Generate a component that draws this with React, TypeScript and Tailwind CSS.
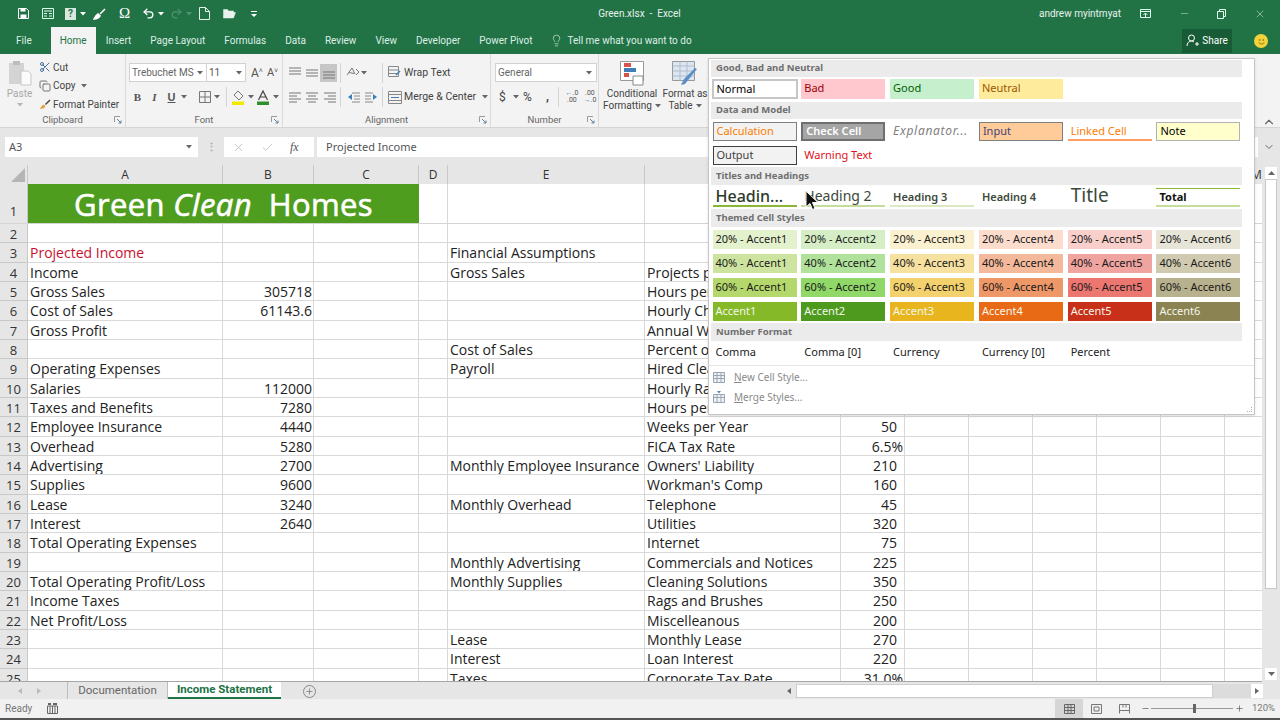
import React from 'react'
import { Scissors, Copy, Undo2, Redo2, Lightbulb, X, Minus, Check, Plus, ChevronUp, ChevronDown } from 'lucide-react'

const Caret = ({ c = '#666' }: { c?: string }) => (
    <svg width="6" height="4" viewBox="0 0 6 4" className="shrink-0"><path d="M0 0h6L3 3.5z" fill={c} /></svg>
)

const Launcher = () => (
    <svg width="8" height="8" viewBox="0 0 8 8" className="shrink-0"><path d="M.5 6V.5H6" fill="none" stroke="#9a9a9a" /><path d="M3 3l4 4M4.5 7H7V4.5" fill="none" stroke="#5f7f9f" /></svg>
)

const Sep = () => <div className="w-px h-[20px] bg-[#d4d4d4] shrink-0" />

const Lines = ({ rows, color = '#777' }: { rows: number[][]; color?: string }) => (
    <svg width="14" height="12" viewBox="0 0 14 12" className="shrink-0">
        {rows.map((r, i) => <path key={i} d={`M${r[0]} ${r[2]}H${r[1]}`} stroke={color} strokeWidth="1" />)}
    </svg>
)

const Tab = ({ label, className = '' }: { label: string; className?: string }) => (
    <span className={`text-[10px] text-[#dfeee5] whitespace-nowrap ${className}`}>{label}</span>
)

const TitleBar = () => (
    <div className="h-[27px] flex items-center text-white relative shrink-0">
        <div className="flex items-center w-[270px] pl-[18px]">
            <svg width="11" height="11" viewBox="0 0 11 11"><path d="M.5.5h8l2 2v8H.5z" fill="none" stroke="#fff" /><path d="M2.5.5h5v3h-5zM2.5 6.5h6v4h-6z" fill="#fff" /></svg>
            <svg width="12" height="11" viewBox="0 0 12 11" className="ml-[13px]"><path d="M.5.5h11v10H.5z" fill="none" stroke="#dfe" /><path d="M2 3h8M2 5.5h3M7 5.5h3M2 8h3M7 8h3" stroke="#dfe" /></svg>
            <div className="ml-[11px] w-[11px] h-[12px] bg-[#d8e8de] text-[#217346] text-[10px] leading-[12px] font-bold text-center">?</div>
            <div className="ml-[4px]"><Caret c="#fff" /></div>
            <svg width="13" height="12" viewBox="0 0 13 12" className="ml-[7px]"><path d="M7 6l5-5M1 11c3 0 5-1 6-3L5 6c-2 1-3 3-4 5z" stroke="#fff" strokeWidth="1.5" fill="#fff" /></svg>
            <span className="ml-[13px] text-[15px] font-['Liberation_Serif',serif] leading-none w-[13px]">Ω</span>
            <Undo2 size={13} strokeWidth={2.5} className="ml-[10px]" />
            <div className="ml-[3px]"><Caret c="#fff" /></div>
            <Redo2 size={13} strokeWidth={2} className="ml-[6px] text-[#4f9470]" />
            <div className="ml-[3px]"><Caret c="#4f9470" /></div>
            <svg width="11" height="13" viewBox="0 0 11 13" className="ml-[7px]"><path d="M.5.5h6l4 4v8H.5zM6.5.5v4h4" fill="none" stroke="#e8f2ec" /></svg>
            <svg width="13" height="11" viewBox="0 0 13 11" className="ml-[13px]"><path d="M.5 10V1.5h4l1 1.5h5v1.5H3L.5 10h10l2-5.5H3" fill="#e8f2ec" stroke="#e8f2ec" strokeWidth=".5" /></svg>
            <svg width="6" height="6" viewBox="0 0 6 6" className="ml-[15px]"><path d="M0 0h6v1H0zM0 3h6L3 6z" fill="#fff" /></svg>
        </div>
        <div className="flex-1 text-center text-[10px] text-[#e8f2ec] -ml-[1px]">Green.xlsx&nbsp; -&nbsp; Excel</div>
        <div className="flex items-center w-[270px] justify-end pr-[14px] text-[#e8f2ec]">
            <span className="text-[10px] mr-[19px]">andrew myintmyat</span>
            <svg width="11" height="9" viewBox="0 0 11 9"><path d="M.5.5h10v8H.5zM.5 2.5h10M5.5 8V4M3.5 6l2-2 2 2" fill="none" stroke="#dfe" /></svg>
            <Minus size={11} className="ml-[28px]" strokeWidth={1} />
            <svg width="9" height="10" viewBox="0 0 9 10" className="ml-[27px]"><path d="M.5 2.5h6v7h-6zM2.5 2.5v-2h6v7h-2" fill="none" stroke="#dfe" /></svg>
            <X size={12} strokeWidth={1} className="ml-[28px]" />
        </div>
    </div>
)

const TabBar = () => (
    <div className="h-[27px] flex items-center shrink-0 pl-[16px]">
        <Tab label="File" />
        <div className="ml-[19px] h-[27px] w-[45px] bg-[#f3f3f3] text-[#217346] text-[10px] flex items-center justify-center self-end">Home</div>
        <Tab label="Insert" className="ml-[10px]" />
        <Tab label="Page Layout" className="ml-[19px]" />
        <Tab label="Formulas" className="ml-[19px]" />
        <Tab label="Data" className="ml-[19px]" />
        <Tab label="Review" className="ml-[19px]" />
        <Tab label="View" className="ml-[19px]" />
        <Tab label="Developer" className="ml-[19px]" />
        <Tab label="Power Pivot" className="ml-[19px]" />
        <Lightbulb size={13} strokeWidth={1.2} className="ml-[18px] text-[#dfeee5]" />
        <Tab label="Tell me what you want to do" className="ml-[4px] text-[#c4dccd]" />
        <div className="ml-auto mr-[48px] h-[24px] w-[50px] bg-[#185c37] flex items-center justify-center gap-[3px] text-white text-[10px]">
            <svg width="13" height="13" viewBox="0 0 13 13"><circle cx="5.5" cy="4" r="3" fill="none" stroke="#fff" /><path d="M1 12c0-3 2-5 4.5-5M9 10h4M11 8v4M5.5 7c1 0 2 .5 2.5 1" fill="none" stroke="#fff" /></svg>
            Share
        </div>
        <div className="absolute right-[12px] top-[34px] w-[14px] h-[14px] rounded-full bg-[#f3d33c] flex items-center justify-center">
            <svg width="11" height="11" viewBox="0 0 11 11"><circle cx="3.8" cy="4" r=".8" fill="#7a5c00" /><circle cx="7.2" cy="4" r=".8" fill="#7a5c00" /><path d="M2.8 6.5c1 2 4.4 2 5.4 0" fill="none" stroke="#7a5c00" strokeWidth=".8" /></svg>
        </div>
    </div>
)

const Group = ({ label, className, children }: { label: string; className: string; children: React.ReactNode }) => (
    <div className={`flex flex-col h-full border-r border-[#dadada] shrink-0 ${className}`}>
        <div className="flex-1 min-h-0">{children}</div>
        <div className="h-[14px] flex items-center justify-center relative text-[9.5px] text-[#666]">
            {label}
            <div className="absolute right-[3px] top-[3px]"><Launcher /></div>
        </div>
    </div>
)

const Ribbon = () => (
    <div className="h-[74px] bg-[#f3f3f3] flex shrink-0 border-b border-[#d5d5d5] text-[#444]">
        <Group label="Clipboard" className="w-[126px]">
            <div className="flex">
                <div className="w-[39px] flex flex-col items-center pt-[6px]">
                    <svg width="24" height="26" viewBox="0 0 24 26"><path d="M1 3h15v21H1z" fill="#d4d4d4" /><path d="M5 1h7v4H5z" fill="#bdbdbd" /><path d="M13 11h7l3 3v11H13z" fill="#fbfbfb" stroke="#c6c6c6" /></svg>
                    <span className="text-[10px] text-[#a9a9a9] leading-[13px] mt-[1px]">Paste</span>
                    <div className="mt-[3px]"><Caret c="#b5b5b5" /></div>
                </div>
                <div className="flex flex-col pt-[4px] text-[10px]">
                    <div className="h-[18.5px] flex items-center gap-[2px]"><Scissors size={12} className="text-[#48729e]" /><span>Cut</span></div>
                    <div className="h-[18.5px] flex items-center gap-[2px]"><Copy size={12} className="text-[#777]" /><span>Copy</span><div className="ml-[3px]"><Caret /></div></div>
                    <div className="h-[18.5px] flex items-center gap-[2px]">
                        <svg width="12" height="11" viewBox="0 0 13 12"><path d="M7 6l5-5" stroke="#444" strokeWidth="1.5" /><path d="M1 11c3 0 5-1 6-3L5 6c-2 1-3 3-4 5z" fill="#e0a040" /></svg>
                        <span className="whitespace-nowrap">Format Painter</span>
                    </div>
                </div>
            </div>
        </Group>
        <Group label="Font" className="w-[157px]">
            <div className="pl-[3px] pt-[9px] flex items-center">
                <div className="w-[78px] h-[19px] bg-white border border-[#d2d2d2] flex items-center justify-between px-[2px] pr-[3px] text-[10px] text-[#666] whitespace-nowrap">Trebuchet MS<Caret /></div>
                <div className="w-[39px] h-[19px] bg-white border border-l-0 border-[#d2d2d2] flex items-center justify-between px-[2px] pr-[3px] text-[10px] text-[#555]">11<Caret /></div>
                <span className="ml-[5px] text-[12px] leading-none text-[#555]">A<sup className="text-[7px]">˄</sup></span>
                <span className="ml-[4px] text-[11px] leading-none text-[#555]">A<sup className="text-[7px]">˅</sup></span>
            </div>
            <div className="pl-[3px] mt-[6px] flex items-center h-[18px] text-[#555]">
                <span className="w-[17px] text-center text-[11px] font-bold font-['Liberation_Serif',serif]">B</span>
                <span className="w-[17px] text-center text-[11px] font-bold italic font-['Liberation_Serif',serif]">I</span>
                <span className="w-[17px] text-center text-[11px] font-bold underline font-['Liberation_Sans',sans-serif]">U</span>
                <div className="ml-[1px] mr-[12px]"><Caret /></div>
                <svg width="12" height="12" viewBox="0 0 12 12"><path d="M.5.5h11v11H.5zM6 .5v11M.5 6h11" fill="none" stroke="#777" /></svg>
                <div className="ml-[3px] mr-[6px]"><Caret /></div>
                <Sep />
                <svg width="14" height="15" viewBox="0 0 14 15" className="ml-[4px]"><path d="M7 1l5 5-4 4-5-5z" fill="none" stroke="#777" /><path d="M1 11.5h12V15H1z" fill="#f5e800" /></svg>
                <div className="ml-[3px] mr-[2px]"><Caret /></div>
                <svg width="14" height="15" viewBox="0 0 14 15"><path d="M2.5 10L7 1l4.500 9M4 7h6" fill="none" stroke="#444" strokeWidth="1.2" /><path d="M1 11.5h12V15H1z" fill="#2f8f2f" /></svg>
                <div className="ml-[3px]"><Caret /></div>
            </div>
        </Group>
        <Group label="Alignment" className="w-[208px]">
            <div className="pt-[9px] flex items-center h-[28px] pl-[5px]">
                <Lines rows={[[1, 13, 1], [1, 13, 4], [1, 13, 7]]} />
                <div className="w-[3px]" />
                <Lines rows={[[1, 13, 3], [1, 13, 6], [1, 13, 9]]} />
                <div className="w-[17px] h-[18px] bg-[#c6c6c6] flex items-center justify-center ml-[1px]"><Lines rows={[[1, 13, 5], [1, 13, 8], [1, 13, 11]]} /></div>
                <div className="mx-[3px]"><Sep /></div>
                <svg width="13" height="13" viewBox="0 0 13 13" className="ml-[2px]"><path d="M1 9l5-7 3 6M3 6.5l5 1M10 3l3 3-3 3" fill="none" stroke="#777" /></svg>
                <div className="ml-[2px] mr-[15px]"><Caret /></div>
                <Sep />
                <svg width="14" height="14" viewBox="0 0 14 14" className="ml-[5px]"><path d="M.5.5h10v10H.5zM.5 4h10M.5 7.5h10" fill="none" stroke="#888" /><path d="M8 9l4-4" stroke="#3f7fb5" strokeWidth="1.5" /></svg>
                <span className="text-[10.5px] ml-[2px] whitespace-nowrap">Wrap Text</span>
            </div>
            <div className="mt-[6px] flex items-center h-[18px] pl-[5px]">
                <Lines rows={[[1, 13, 2], [1, 9, 5], [1, 13, 8], [1, 9, 11]]} />
                <div className="w-[3px]" />
                <Lines rows={[[1, 13, 2], [3, 11, 5], [1, 13, 8], [3, 11, 11]]} />
                <div className="w-[4px]" />
                <Lines rows={[[1, 13, 2], [5, 13, 5], [1, 13, 8], [5, 13, 11]]} />
                <div className="mx-[3px]"><Sep /></div>
                <svg width="14" height="12" viewBox="0 0 14 12" className="ml-[3px]"><path d="M5 2h8M7 5h6M7 8h6M5 11h8" stroke="#888" /><path d="M5 3L1 6l4 3z" fill="#3f7fb5" /></svg>
                <svg width="14" height="12" viewBox="0 0 14 12" className="ml-[3px]"><path d="M1 2h8M1 5h6M1 8h6M1 11h8" stroke="#888" /><path d="M9 3l4 3-4 3z" fill="#3f7fb5" /></svg>
                <div className="ml-[4px]"><Sep /></div>
                <svg width="14" height="13" viewBox="0 0 14 13" className="ml-[5px]"><path d="M.5.5h13v12H.5zM.5 3.5h13M.5 9.5h13" fill="none" stroke="#888" /><path d="M3 6.5h8" stroke="#3f7fb5" /></svg>
                <span className="text-[10.5px] ml-[2px] whitespace-nowrap">Merge &amp; Center</span>
                <div className="ml-[6px]"><Caret /></div>
            </div>
        </Group>
        <Group label="Number" className="w-[108px]">
            <div className="pl-[4px] pt-[9px]">
                <div className="w-[102px] h-[19px] bg-white border border-[#d2d2d2] flex items-center justify-between px-[2px] pr-[4px] text-[10px] text-[#666]">General<Caret /></div>
            </div>
            <div className="mt-[6px] flex items-center h-[18px] pl-[8px]">
                <span className="text-[12px] w-[9px]">$</span>
                <div className="ml-[5px] mr-[4px]"><Caret /></div>
                <span className="text-[12px] w-[12px]">%</span>
                <span className="ml-[11px] mr-[9px] text-[12px] font-bold leading-none">,</span>
                <Sep />
                <div className="ml-[6px] w-[14px] text-[7px] leading-[7px] text-center text-[#555]"><span className="text-[#3f7fb5]">←</span>.0<br />.00</div>
                <div className="ml-[4px] w-[14px] text-[7px] leading-[7px] text-center text-[#555]">.00<br /><span className="text-[#3f7fb5]">→</span>.0</div>
            </div>
        </Group>
        <div className="flex pl-[6px] text-[10px] leading-[12px] text-center">
            <div className="w-[54px] flex flex-col items-center pt-[7px]">
                <svg width="24" height="26" viewBox="0 0 24 26">
                    <path d="M.5.5h23v19H.5z" fill="#fff" stroke="#999" />
                    <path d="M4 2h7v4H4z" fill="#d8534a" /><path d="M4 7h12v4H4z" fill="#3f7fb5" /><path d="M4 12h5v4H4z" fill="#d8534a" />
                    <path d="M13 15h10v9H13z" fill="#fff" stroke="#888" />
                </svg>
                <span className="mt-[1px]">Conditional</span>
                <span className="whitespace-nowrap flex items-center gap-[3px]">Formatting <Caret /></span>
            </div>
            <div className="w-[52px] flex flex-col items-center pt-[7px]">
                <svg width="26" height="26" viewBox="0 0 26 26">
                    <path d="M.5.5h22v19H.5z" fill="#dce6f2" stroke="#999" />
                    <path d="M.5 5h22M.5 10h22M.5 15h22M8 .5v19M15 .5v19" stroke="#b0bcc8" />
                    <path d="M25 8l-8 10-4 5-4 1 3-6 11-11z" fill="#5b8fc5" />
                </svg>
                <span className="mt-[1px] whitespace-nowrap">Format as</span>
                <span className="whitespace-nowrap flex items-center gap-[3px]">Table <Caret /></span>
            </div>
        </div>
    </div>
)

const FormulaBar = () => (
    <div className="h-[37px] bg-[#e6e6e6] shrink-0 flex items-start pt-[9px] text-[11px] text-[#555] relative font-['Noto_Sans',sans-serif]">
        <div className="ml-[5px] w-[193px] h-[20px] bg-white flex items-center justify-between px-[4px] pr-[6px]">A3<Caret /></div>
        <div className="w-[26px] h-[20px] flex items-center justify-center text-[#aaa] font-bold">⋮</div>
        <div className="w-[90px] h-[20px] bg-white flex items-center pl-[8px] text-[#bbb]">
            <X size={13} strokeWidth={1.5} />
            <Check size={13} strokeWidth={1.5} className="ml-[16px]" />
            <span className="ml-[16px] text-[12px] italic font-['Liberation_Serif',serif] text-[#555]">fx</span>
        </div>
        <div className="ml-[3px] w-[941px] h-[20px] bg-white flex items-center pl-[9px]">Projected Income</div>
        <ChevronDown size={12} className="ml-[5px] mt-[4px] text-[#666]" />
        <ChevronUp size={14} className="absolute right-[4px] -top-[13px] text-[#666]" />
    </div>
)

const colWidths = ['w-[195px]', 'w-[91px]', 'w-[105px]', 'w-[29px]', 'w-[197px]', 'w-[196px]', 'w-[64px]', 'w-[64px]', 'w-[64px]', 'w-[64px]', 'w-[64px]', 'w-[64px]', 'w-[64px]']
const colNames = ['A', 'B', 'C', 'D', 'E', 'F', 'G', 'H', 'I', 'J', 'K', 'L', 'M']

const rows: string[][] = [
    ['2'],
    ['3', 'Projected Income', '', '', '', 'Financial Assumptions'],
    ['4', 'Income', '', '', '', 'Gross Sales', 'Projects per Week'],
    ['5', 'Gross Sales', '305718', '', '', '', 'Hours per Project'],
    ['6', 'Cost of Sales', '61143.6', '', '', '', 'Hourly Charge'],
    ['7', 'Gross Profit', '', '', '', '', 'Annual Weeks'],
    ['8', '', '', '', '', 'Cost of Sales', 'Percent of Sales'],
    ['9', 'Operating Expenses', '', '', '', 'Payroll', 'Hired Cleaners'],
    ['10', 'Salaries', '112000', '', '', '', 'Hourly Rate'],
    ['11', 'Taxes and Benefits', '7280', '', '', '', 'Hours per Week'],
    ['12', 'Employee Insurance', '4440', '', '', '', 'Weeks per Year', '50'],
    ['13', 'Overhead', '5280', '', '', '', 'FICA Tax Rate', '6.5%'],
    ['14', 'Advertising', '2700', '', '', 'Monthly Employee Insurance', "Owners' Liability", '210'],
    ['15', 'Supplies', '9600', '', '', '', "Workman's Comp", '160'],
    ['16', 'Lease', '3240', '', '', 'Monthly Overhead', 'Telephone', '45'],
    ['17', 'Interest', '2640', '', '', '', 'Utilities', '320'],
    ['18', 'Total Operating Expenses', '', '', '', '', 'Internet', '75'],
    ['19', '', '', '', '', 'Monthly Advertising', 'Commercials and Notices', '225'],
    ['20', 'Total Operating Profit/Loss', '', '', '', 'Monthly Supplies', 'Cleaning Solutions', '350'],
    ['21', 'Income Taxes', '', '', '', '', 'Rags and Brushes', '250'],
    ['22', 'Net Profit/Loss', '', '', '', '', 'Miscelleanous', '200'],
    ['23', '', '', '', '', 'Lease', 'Monthly Lease', '270'],
    ['24', '', '', '', '', 'Interest', 'Loan Interest', '220'],
    ['25', '', '', '', '', 'Taxes', 'Corporate Tax Rate', '31.0%'],
]

const cellAlign = (col: number, v: string) => {
    if (col === 1) return 'text-right pr-[1px]'
    if (col === 6) return v.endsWith('%') ? 'text-right pr-[1px]' : 'text-right pr-[7px]'
    return 'pl-[2px]'
}

const Sheet = () => (
    <div className="flex h-[517px] shrink-0 bg-[#e6e6e6]">
        <div className="w-[1262px] overflow-hidden bg-white border-b border-[#a6a6a6]">
            <div className="flex h-[19px] bg-[#e6e6e6] w-[1400px]">
                <div className="w-[28px] shrink-0 relative border-r border-[#c8c8c8]">
                    <svg width="14" height="14" viewBox="0 0 14 14" className="absolute right-[2px] bottom-[2px]"><path d="M14 0v14H0z" fill="#b5b5b5" /></svg>
                </div>
                {colNames.map((c, i) => (
                    <div key={c} className={`${colWidths[i]} shrink-0 border-r border-[#c8c8c8] text-center text-[12px] leading-[19px] text-[#333]`}>{c}</div>
                ))}
            </div>
            <div className="flex h-[40px] w-[1400px] border-b border-[#d4d4d4]">
                <div className="w-[28px] shrink-0 bg-[#e6e6e6] border-r border-[#c8c8c8] text-center text-[13px] text-[#333] flex items-end justify-center leading-[19px] pb-[2px]">1</div>
                <div className="w-[391px] shrink-0 bg-[#4f9d1e] text-white text-[31px] tracking-[0.35px] [-webkit-text-stroke:0.6px_#fff] leading-[41px] text-center whitespace-pre">Green <i>Clean</i>  Homes</div>
                {colWidths.slice(3).map((w, i) => <div key={i} className={`${w} shrink-0 border-r border-[#d9d9d9]`} />)}
            </div>
            {rows.map(r => (
                <div key={r[0]} className="flex h-[19.33px] w-[1400px]">
                    <div className="w-[28px] shrink-0 bg-[#e6e6e6] border-r border-b border-[#c8c8c8] text-center text-[13px] leading-[20px] text-[#333]">{r[0]}</div>
                    {colWidths.map((w, i) => {
                        const v = r[i + 1] && i < 2 ? r[i + 1] : i === 4 ? r[5] : i === 5 ? r[6] : i === 6 ? r[7] : ''
                        return (
                            <div key={i} className={`${w} shrink-0 border-r border-b border-[#d9d9d9] text-[14px] leading-[20px] whitespace-nowrap overflow-hidden ${cellAlign(i, v || '')} ${r[0] === '3' && i === 0 ? 'text-[#c8102e]' : 'text-[#222]'}`}>{v}</div>
                        )
                    })}
                </div>
            ))}
        </div>
        <div className="flex-1 flex flex-col items-center pt-[2px] pb-[2px] relative">
            <div className="w-[12px] h-[12px] bg-white flex items-center justify-center"><svg width="7" height="4" viewBox="0 0 7 4"><path d="M0 4h7L3.5 0z" fill="#666" /></svg></div>
            <div className="w-[12px] h-[410px] bg-white border border-[#c8c8c8]" />
            <div className="flex-1" />
            <div className="w-[12px] h-[12px] bg-white flex items-center justify-center"><svg width="7" height="4" viewBox="0 0 7 4"><path d="M0 0h7L3.5 4z" fill="#666" /></svg></div>
        </div>
    </div>
)

const SheetTabs = () => (
    <div className="h-[17px] bg-[#e6e6e6] shrink-0 flex items-start text-[11.5px] relative">
        <div className="w-[68px] h-full flex items-center pl-[18px] gap-[15px] border-r border-[#bdbdbd]">
            <svg width="4" height="6" viewBox="0 0 4 6"><path d="M4 0v6L0 3z" fill="#bbb" /></svg>
            <svg width="4" height="6" viewBox="0 0 4 6"><path d="M0 0v6l4-3z" fill="#bbb" /></svg>
        </div>
        <div className="w-[100px] h-full flex items-center justify-center text-[#666] border-r border-[#bdbdbd]">Documentation</div>
        <div className="w-[113px] h-full flex items-center justify-center bg-white text-[#217346] font-bold border-b-2 border-[#217346] whitespace-nowrap">Income Statement</div>
        <div className="ml-[22px] mt-[3px] w-[13px] h-[13px] rounded-full border border-[#888] flex items-center justify-center"><Plus size={9} className="text-[#777]" /></div>
        <div className="ml-auto mr-[17px] flex items-center h-full">
            <svg width="4" height="6" viewBox="0 0 4 6" className="mr-[5px]"><path d="M4 0v6L0 3z" fill="#666" /></svg>
            <div className="w-[417px] h-[14px] bg-white border border-[#cfcfcf]" />
            <div className="w-[38px] h-[14px] bg-[#dcdcdc]" />
            <div className="w-[12px] h-[14px] bg-white flex items-center justify-center"><svg width="4" height="6" viewBox="0 0 4 6"><path d="M0 0v6l4-3z" fill="#666" /></svg></div>
        </div>
    </div>
)

const StatusBar = () => (
    <div className="h-[19px] bg-[#f1f1f1] shrink-0 flex items-center text-[10px] text-[#777] pl-[5px] pr-[5px]">
        <span>Ready</span>
        <svg width="11" height="11" viewBox="0 0 11 11" className="ml-[15px]"><path d="M.5 3h10v7.5H.5zM3 3v7.5M5.5 3v7.5M8 3v7.5" fill="none" stroke="#666" /><path d="M1 0h3v2H1zM6 0h4v2H6z" fill="#666" /></svg>
        <div className="ml-auto w-[28px] h-full bg-[#d6d6d6] flex items-center justify-center">
            <svg width="11" height="10" viewBox="0 0 11 10"><path d="M.5.5h10v9H.5zM.5 3.5h10M.5 6.5h10M4 .5v9M7 .5v9" fill="none" stroke="#666" /></svg>
        </div>
        <svg width="11" height="10" viewBox="0 0 11 10" className="ml-[8px]"><path d="M.5.5h10v9H.5zM3 3h5v4H3z" fill="none" stroke="#777" /></svg>
        <svg width="11" height="10" viewBox="0 0 11 10" className="ml-[17px]"><path d="M.5 9.5V.5h10v9M.5 6.5h10M4 .5v3M7 .5v3" fill="none" stroke="#777" /></svg>
        <Minus size={9} strokeWidth={2} className="ml-[11px] text-[#666]" />
        <div className="w-[82px] h-px bg-[#999] ml-[1px] mr-[1px] relative"><div className="absolute left-[42px] -top-[4px] w-[3px] h-[9px] bg-[#666]" /></div>
        <Plus size={9} strokeWidth={2} className="ml-[1px] text-[#666]" />
        <span className="ml-[8px] text-[9.5px]">120%</span>
    </div>
)

const Head = ({ tall, children }: { tall?: boolean; children: React.ReactNode }) => (
    <div className={`${tall ? 'h-[18px]' : 'h-[17px]'} w-[531px] ml-[2px] bg-[#ebebeb] flex items-center pl-[5px] text-[9.5px] font-bold text-[#6f6f6f] shrink-0`}>{children}</div>
)

const GridRow = ({ className = '', children }: { className?: string; children: React.ReactNode }) => (
    <div className={`grid grid-cols-[repeat(6,84px)] gap-x-[4.8px] pl-[3.5px] text-[11px] leading-[18px] ${className}`}>{children}</div>
)

const Sw = ({ className = '', children }: { className?: string; children?: React.ReactNode }) => (
    <div className={`h-[19px] pl-[3px] whitespace-nowrap overflow-hidden ${className}`}>{children}</div>
)

const themed = [
    ['20% - Accent', ['bg-[#e4f1cd]', 'bg-[#d5eec5]', 'bg-[#fbf0cf]', 'bg-[#fbdccd]', 'bg-[#f8cfcb]', 'bg-[#e7e5d8]']],
    ['40% - Accent', ['bg-[#cde4a0]', 'bg-[#b1e29b]', 'bg-[#f7e1a0]', 'bg-[#f4b89b]', 'bg-[#f0a4a0]', 'bg-[#d0cbb0]']],
    ['60% - Accent', ['bg-[#b4d86c]', 'bg-[#90d868]', 'bg-[#f3d26e]', 'bg-[#ee9868]', 'bg-[#ec7670]', 'bg-[#b8b18d]']],
] as [string, string[]][]

const accents = ['bg-[#86b928]', 'bg-[#4e9a1f]', 'bg-[#e8b51f]', 'bg-[#e86a15]', 'bg-[#c8301a]', 'bg-[#8b8352]']

const StylesMenu = () => (
    <div className="absolute left-[708px] top-[58px] w-[547px] h-[357px] bg-white border border-[#c6c6c6] shadow-sm flex flex-col pt-[1px] text-[#222] font-['Noto_Sans',sans-serif]">
        <Head>Good, Bad and Neutral</Head>
        <GridRow className="mt-[2px]">
            <Sw className="h-[20px] border-2 border-[#c6c6c6] text-black pl-[1px] leading-[15px] -mx-[1px]">Normal</Sw>
            <Sw className="h-[20px] bg-[#ffc7ce] text-[#9c0006]">Bad</Sw>
            <Sw className="h-[20px] bg-[#c6efce] text-[#006100]">Good</Sw>
            <Sw className="h-[20px] bg-[#ffeb9c] text-[#9c5700]">Neutral</Sw>
        </GridRow>
        <div className="h-[3px] shrink-0" />
        <Head>Data and Model</Head>
        <GridRow className="mt-[3px]">
            <Sw className="bg-[#f2f2f2] border border-[#7f7f7f] text-[#fa7d00] leading-[16px] pl-[2px]">Calculation</Sw>
            <Sw className="bg-[#a5a5a5] border-2 border-[#6f6f6f] text-white leading-[14px] pl-[1px] font-semibold">Check Cell</Sw>
            <Sw className="italic text-[#7f7f7f] text-[12px] tracking-[0.7px]">Explanator...</Sw>
            <Sw className="bg-[#ffcc99] border border-[#7f7f7f] text-[#3f3f76] leading-[16px] pl-[2px]">Input</Sw>
            <Sw className="text-[#fa7d00] border-b-2 border-[#ff9f5f] leading-[17px]">Linked Cell</Sw>
            <Sw className="bg-[#ffffcc] border border-[#b2b2b2] text-black leading-[16px] pl-[2px]">Note</Sw>
        </GridRow>
        <GridRow className="mt-[5px]">
            <Sw className="bg-[#f2f2f2] border border-[#3f3f3f] text-[#3f3f3f] leading-[16px] pl-[2px]">Output</Sw>
            <Sw className="text-[#e01020]">Warning Text</Sw>
        </GridRow>
        <div className="h-[2px] shrink-0" />
        <Head tall>Titles and Headings</Head>
        <GridRow className="mt-[3px]">
            <Sw className="text-[#2b3a2a] text-[16px] font-medium leading-[16px] border-b-2 border-[#8ab833]">Headin...</Sw>
            <Sw className="text-[#3b4a3a] text-[14px] leading-[16px] border-b-2 border-[#c5dc9b]">Heading 2</Sw>
            <Sw className="text-[#3b4a3a] text-[11px] font-semibold border-b-2 border-[#dbe9c2] leading-[17px]">Heading 3</Sw>
            <Sw className="text-[#3b4a3a] text-[11px] font-semibold leading-[18px]">Heading 4</Sw>
            <Sw className="text-[#3b4a3a] text-[19px] leading-[14px]">Title</Sw>
            <Sw className="font-bold text-[#111] border-t border-b-2 border-t-[#8ab833] border-b-[#c5dc9b] leading-[16px]">Total</Sw>
        </GridRow>
        <div className="h-[2px] shrink-0" />
        <Head tall>Themed Cell Styles</Head>
        <div className="mt-[3px] flex flex-col gap-[5px]">
            {themed.map(([label, colors]) => (
                <GridRow key={label}>
                    {colors.map((c, i) => <Sw key={c} className={`${c} text-[#1a1a1a]`}>{label}{i + 1}</Sw>)}
                </GridRow>
            ))}
            <GridRow>
                {accents.map((c, i) => <Sw key={c} className={`${c} text-[#f3f7ea]`}>Accent{i + 1}</Sw>)}
            </GridRow>
        </div>
        <div className="h-[2px] shrink-0" />
        <Head tall>Number Format</Head>
        <GridRow className="mt-[2px]">
            <Sw>Comma</Sw>
            <Sw>Comma [0]</Sw>
            <Sw>Currency</Sw>
            <Sw>Currency [0]</Sw>
            <Sw>Percent</Sw>
        </GridRow>
        <div className="h-px bg-[#e6e6e6] mt-[3px] shrink-0" />
        <div className="flex items-center h-[20px] mt-[1px] pl-[4px] text-[10px] text-[#8a8a8a]">
            <svg width="12" height="11" viewBox="0 0 12 11"><path d="M.5.5h11v10H.5zM.5 3.5h11M.5 6.5h11M4 .5v10M8 .5v10" fill="#eef2f7" stroke="#9aa5b1" /></svg>
            <span className="ml-[9px]"><u>N</u>ew Cell Style...</span>
        </div>
        <div className="flex items-center h-[20px] pl-[4px] text-[10px] text-[#8a8a8a]">
            <svg width="12" height="12" viewBox="0 0 12 12"><path d="M.5 3.5h11v8H.5zM.5 6.5h11M4 3.5v8M8 3.5v8" fill="#eef2f7" stroke="#9aa5b1" /><path d="M4 0h4L6 2.5z" fill="#5a7fa8" /></svg>
            <span className="ml-[9px]"><u>M</u>erge Styles...</span>
        </div>
        <div className="absolute right-[2px] bottom-[2px] w-[5px] h-[5px] border-r border-b border-dotted border-[#aaa]" />
    </div>
)

const Pointer = () => (
    <svg width="14" height="21" viewBox="0 0 14 21" className="absolute left-[805px] top-[190px]">
        <path d="M1 1v16l4-3.5 2.5 6 2.5-1-2.5-6H13z" fill="#111" stroke="#fff" strokeWidth="1" />
    </svg>
)

export default function App() {
    return (
        <div className="relative w-[1280px] h-[720px] overflow-hidden bg-[#217346] flex flex-col font-['Roboto',sans-serif]">
            <TitleBar />
            <TabBar />
            <Ribbon />
            <FormulaBar />
            <div className="font-['Open_Sans',sans-serif]"><Sheet /></div>
            <SheetTabs />
            <StatusBar />
            <div className="h-[2px] bg-[#555] shrink-0" />
            <StylesMenu />
            <Pointer />
        </div>
    )
}
